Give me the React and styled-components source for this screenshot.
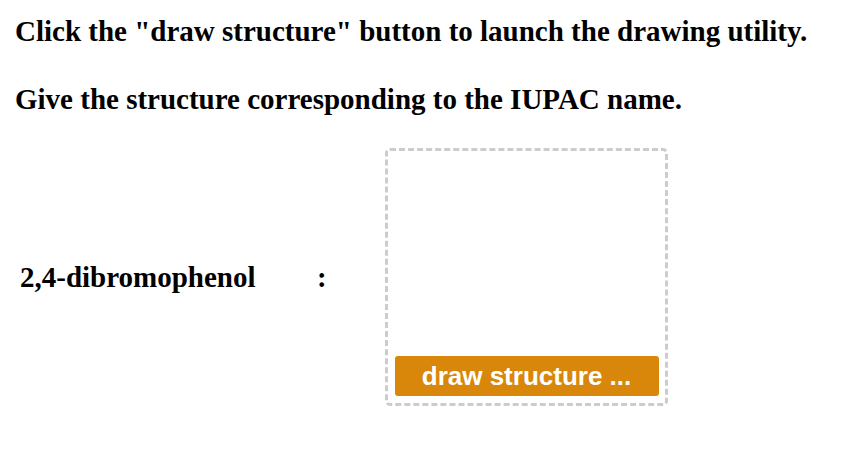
import React from "react"
import styled, { createGlobalStyle } from "styled-components"

const GlobalStyle = createGlobalStyle`
  body {
    margin: 0;
    background: #ffffff;
    font-family: "Liberation Serif", "Times New Roman", serif;
    color: #000000;
  }
`

const Page = styled.div`
  padding: 14px 15px 0 15px;
`

const Prompt = styled.p`
  margin: 0 0 ${(props) => props.gap || "0"};
  font-size: 29px;
  font-weight: bold;
  line-height: 34px;
  white-space: nowrap;
`

const Row = styled.div`
  display: flex;
  align-items: center;
  margin-top: 32px;
`

const Name = styled.div`
  width: 297px;
  padding-left: 5px;
  font-size: 29px;
  font-weight: bold;
  line-height: 34px;
`

const Colon = styled.div`
  width: 68px;
  font-size: 29px;
  font-weight: bold;
  line-height: 34px;
`

const Canvas = styled.div`
  width: 283px;
  height: 258px;
  box-sizing: border-box;
  border: 3px dashed #cccccc;
  border-radius: 5px;
  display: flex;
  flex-direction: column;
  justify-content: flex-end;
  align-items: center;
  padding-bottom: 7px;
`

const DrawButton = styled.button`
  width: 264px;
  height: 40px;
  border: none;
  border-radius: 3px;
  background: #d9870a;
  color: #ffffff;
  font-family: "Liberation Sans", Arial, sans-serif;
  font-size: 26px;
  font-weight: bold;
  padding: 0;
  cursor: pointer;
`

export default function App() {
  return (
    <>
      <GlobalStyle />
      <Page>
        <Prompt gap="34px">Click the "draw structure" button to launch the drawing utility.</Prompt>
        <Prompt>Give the structure corresponding to the IUPAC name.</Prompt>
        <Row>
          <Name>2,4-dibromophenol</Name>
          <Colon>:</Colon>
          <Canvas>
            <DrawButton>draw structure ...</DrawButton>
          </Canvas>
        </Row>
      </Page>
    </>
  )
}
